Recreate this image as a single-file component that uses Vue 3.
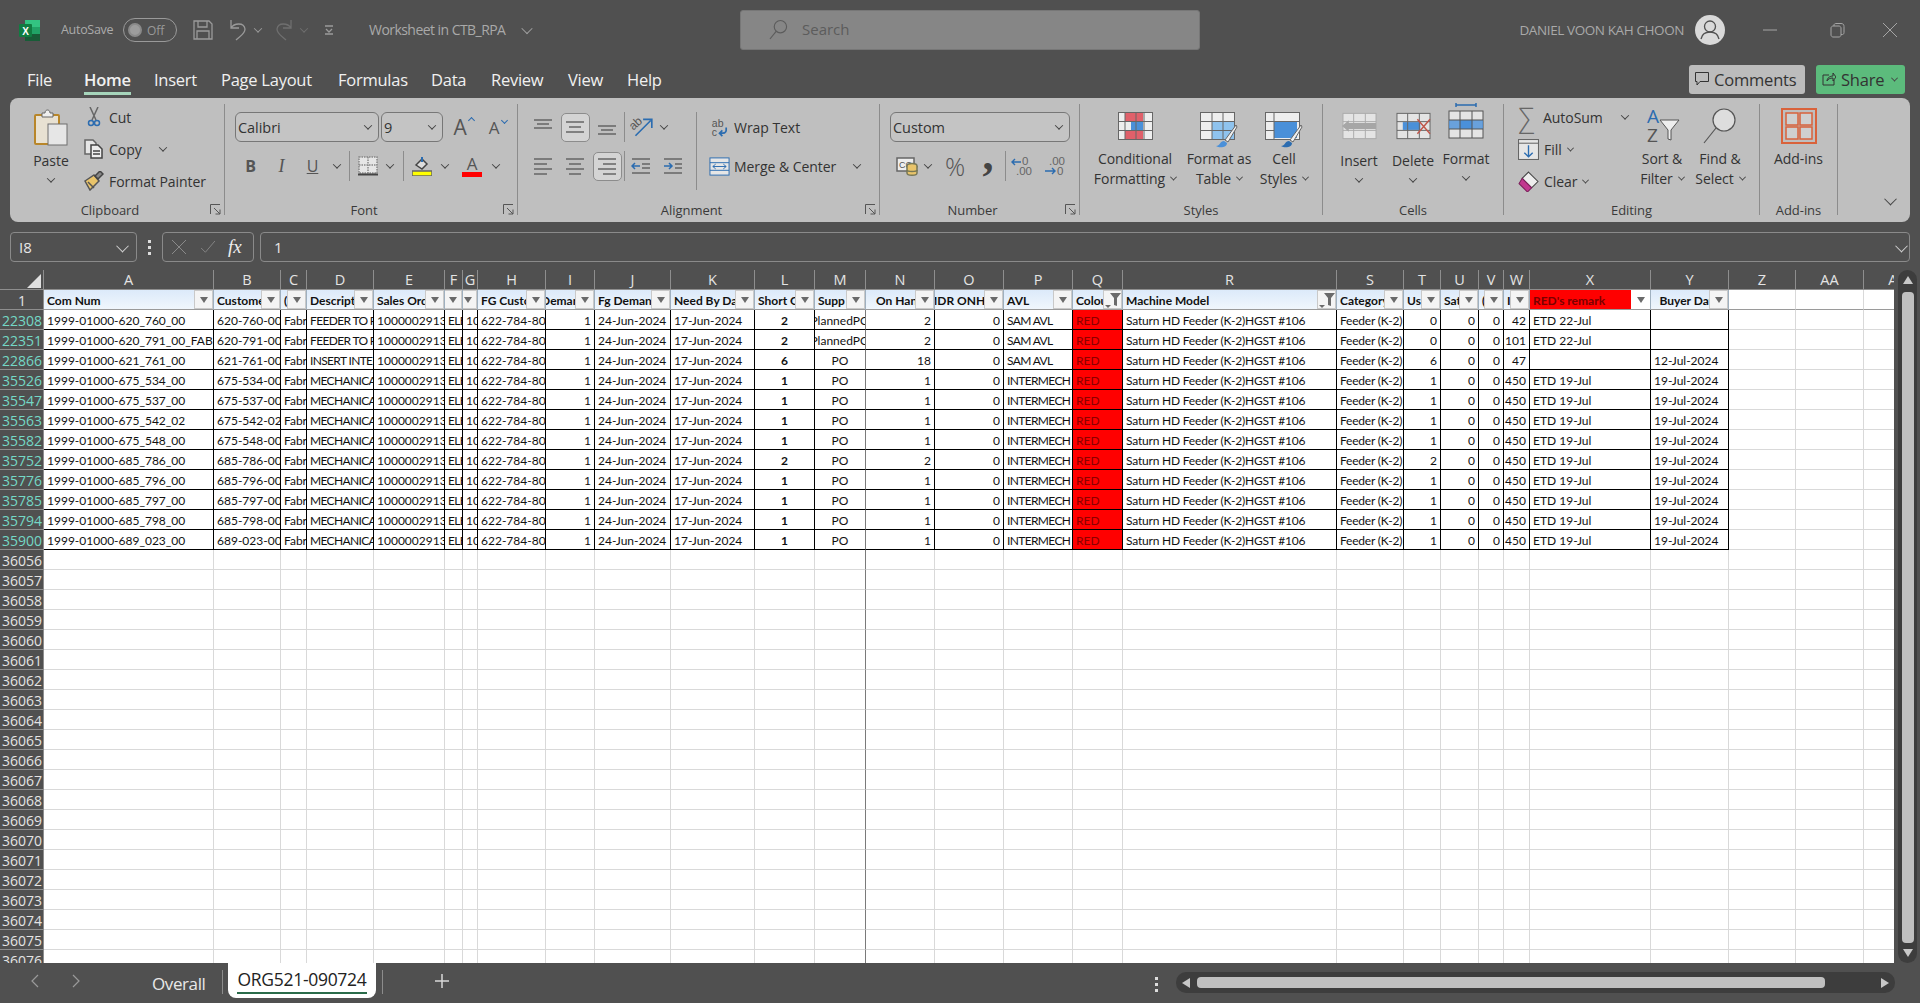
<template>
	<div class="app">
		<div class="titlebar">
			<div class="title-left">
				<svg class="logo" viewBox="0 0 21 21">
					<rect x="6" y="0" width="15" height="7" fill="#33c481" />
					<rect x="6" y="7" width="15" height="7" fill="#21a366" />
					<rect x="6" y="14" width="15" height="7" fill="#185c37" />
					<rect x="0" y="4" width="13" height="13" rx="1" fill="#107c41" />
					<text x="6.5" y="14.5" text-anchor="middle" class="logo-x">X</text>
				</svg>
				<span class="autosave">AutoSave</span>
				<span class="toggle"><i></i>Off</span>
				<svg class="qa save" viewBox="0 0 20 20"><path d="M1 1h15l3 3v15H1zM5 1v6h9V1M4 19v-8h12v8" /></svg>
				<svg class="qa undo" viewBox="0 0 18 22"><path d="M2 1v8h8M2 9c3-5 13-6 14 1 0 5-5 7-9 11" /></svg>
				<span class="chev dim"></span>
				<svg class="qa redo" viewBox="0 0 18 22"><path d="M16 1v8H8M16 9c-3-5-13-6-14 1 0 5 5 7 9 11" /></svg>
				<span class="chev dimmer"></span>
				<svg class="qa cust" viewBox="0 0 8 10"><path d="M0 1h8M1 4l3 3 3-3M0 9h8" /></svg>
				<span class="doc">Worksheet in CTB_RPA</span>
				<span class="chev doc-chev"></span>
			</div>
			<div class="search">
				<svg viewBox="0 0 20 22"><circle cx="12" cy="8" r="6.5" /><path d="M7.5 13L1 21" /></svg>
				<span>Search</span>
			</div>
			<div class="title-right">
				<span class="user">DANIEL VOON KAH CHOON</span>
				<svg class="avatar" viewBox="0 0 30 30">
					<circle cx="15" cy="15" r="15" fill="#d9d9d9" />
					<circle cx="15" cy="11.5" r="5.5" fill="none" stroke="#505050" stroke-width="1.3" />
					<path d="M6 24c1-5 5-7 9-7s8 2 9 7" fill="none" stroke="#505050" stroke-width="1.3" />
				</svg>
				<svg class="win wmin" viewBox="0 0 14 14"><path d="M0 7h14" /></svg>
				<svg class="win wres" viewBox="0 0 15 15"><path d="M4 3V2c0-1 1-1.500 2-1.500h5c2 0 3 1 3 3v6c0 1-.5 2-1.500 2H11M1 5c0-1 1-2 2-2h6c1 0 2 1 2 2v7c0 1-1 2-2 2H3c-1 0-2-1-2-2z" /></svg>
				<svg class="win wclose" viewBox="0 0 14 14"><path d="M0 0l14 14M14 0L0 14" /></svg>
			</div>
		</div>

		<div class="tabsrow">
			<span v-for="t of tabs" :key="t.name" class="tab" :style="{ width: t.w + 'px' }">
				<span :class="{ on: t.name === 'Home' }">{{ t.name }}</span>
			</span>
			<button class="comments">
				<svg viewBox="0 0 14 14"><path d="M.5.500h13v9H5l-3 3.500V9.500H.5z" /></svg>
				Comments
			</button>
			<button class="share">
				<svg viewBox="0 0 14 14"><path d="M7 3H1v10h11V8M5 9c0-3 3-5 6-5V1l3 4-3 4V6C8 6 6 7 5 9z" /></svg>
				Share
				<span class="chev"></span>
			</button>
		</div>

		<div class="ribbon">
			<section class="grp g-clip">
				<div class="body">
					<div class="big paste">
						<svg class="ic-paste" viewBox="0 0 34 38">
							<rect x="1" y="7" width="24" height="29" rx="1" fill="#e8e1d2" stroke="#b8862a" stroke-width="2" />
							<path d="M8 9V5h3c0-4 5-4 5 0h3v4z" fill="#eee" stroke="#666" />
							<rect x="14" y="16" width="19" height="21" fill="#e6e6e6" stroke="#6e6e6e" />
						</svg>
						<span class="cap">Paste</span>
						<span class="chev"></span>
					</div>
					<div class="stack">
						<div class="sm">
							<svg class="ic" viewBox="0 0 18 20"><path d="M5 0l6 13M13 0L7 13" stroke="#666" fill="none" /><circle cx="6" cy="16" r="2.500" fill="none" stroke="#2b6cb0" stroke-width="1.500" /><circle cx="12" cy="16" r="2.500" fill="none" stroke="#2b6cb0" stroke-width="1.500" /></svg>
							<span>Cut</span>
						</div>
						<div class="sm">
							<svg class="ic" viewBox="0 0 20 20"><path d="M1 1h8l3 3v11H1z" fill="#e6e6e6" stroke="#666" /><path d="M7 6h7l4 4v9H7z" fill="#eee" stroke="#444" /><path d="M9 12h7M9 15h7" stroke="#444" /></svg>
							<span>Copy</span>
							<span class="chev copy-chev"></span>
						</div>
						<div class="sm">
							<svg class="ic" viewBox="0 0 20 20"><path d="M1 10l9-6 5 6-9 9z" fill="#e9c46a" stroke="#555" /><path d="M11 5l5-5 3 3-5 5z" fill="#888" stroke="#444" /><path d="M4 11l6 6" stroke="#555" /></svg>
							<span>Format Painter</span>
						</div>
					</div>
				</div>
				<div class="lab"><span>Clipboard</span><svg class="launch" viewBox="0 0 11 11"><path d="M.5 10V.5H10M4 4l6 6M10 5.500V10H5.500" /></svg></div>
			</section>

			<section class="grp g-font">
				<div class="body rows">
					<div class="row">
						<div class="combo c-font">Calibri<span class="chev"></span></div>
						<div class="combo c-size">9<span class="chev"></span></div>
						<span class="grow">A<i class="up"></i></span>
						<span class="shrink">A<i class="down"></i></span>
					</div>
					<div class="row">
						<span class="tool fmt b">B</span>
						<span class="tool fmt i">I</span>
						<span class="tool fmt u">U</span>
						<span class="chevcell w17"><span class="chev"></span></span>
						<span class="vsep m4"></span>
						<span class="tool w27">
							<svg class="ic" viewBox="0 0 20 20"><rect x="1" y="1" width="18" height="16" fill="#e6e6e6" stroke="#888" stroke-dasharray="1.500 1" /><path d="M10 1v16M1 9h18" stroke="#888" stroke-dasharray="1.500 1" /><path d="M0 18.500h20" stroke="#444" stroke-width="2" /></svg>
						</span>
						<span class="chevcell w18"><span class="chev"></span></span>
						<span class="vsep m4"></span>
						<span class="tool w28">
							<svg class="ic" viewBox="0 0 20 20"><path d="M4 9l6-6 5 5-5 5z" fill="#ddd" stroke="#444" /><path d="M10 1v5" stroke="#2b6cb0" stroke-width="2" /><rect x="0" y="15" width="20" height="5" fill="#ffff00" /></svg>
						</span>
						<span class="chevcell w18"><span class="chev"></span></span>
						<span class="tool fontcolor"><em>A</em><i></i></span>
						<span class="chevcell w12"><span class="chev"></span></span>
					</div>
				</div>
				<div class="lab"><span>Font</span><svg class="launch" viewBox="0 0 11 11"><path d="M.5 10V.5H10M4 4l6 6M10 5.500V10H5.500" /></svg></div>
			</section>

			<section class="grp g-align">
				<div class="body align-body">
					<div class="rows align-left">
						<div class="row">
							<span class="tool w32"><svg class="ic" viewBox="0 0 20 20"><path d="M1 3h18M4 7h12M1 11h18" /></svg></span>
							<span class="tool w32"><span class="boxed"><svg class="ic" viewBox="0 0 20 20"><path d="M1 5h18M4 10h12M1 15h18" /></svg></span></span>
							<span class="tool w32"><svg class="ic" viewBox="0 0 20 20"><path d="M1 9h18M4 13h12M1 17h18" /></svg></span>
							<span class="vsep m1"></span>
							<span class="tool w34"><svg class="ic orient" viewBox="0 0 22 22"><text x="0" y="11" class="mini wide" transform="rotate(-42 6 9)">ab</text><path d="M5 19L19 5M12 4h8v8" stroke="#2b6cb0" stroke-width="1.500" /></svg></span>
							<span class="chevcell w10"><span class="chev"></span></span>
						</div>
						<div class="row">
							<span class="tool w32"><svg class="ic" viewBox="0 0 20 20"><path d="M1 3h18M1 8h13M1 13h18M1 18h13" /></svg></span>
							<span class="tool w32"><svg class="ic" viewBox="0 0 20 20"><path d="M1 3h18M4 8h12M1 13h18M4 18h12" /></svg></span>
							<span class="tool w32"><span class="boxed"><svg class="ic" viewBox="0 0 20 20"><path d="M1 3h18M6 8h13M1 13h18M6 18h13" /></svg></span></span>
							<span class="vsep m1"></span>
							<span class="tool w32"><svg class="ic" viewBox="0 0 20 20"><path d="M1 3h18M11 8h8M11 12h8M1 17h18" /><path d="M9 10H1M4 7l-3 3 3 3" stroke="#2b6cb0" stroke-width="1.500" /></svg></span>
							<span class="tool w32"><svg class="ic" viewBox="0 0 20 20"><path d="M1 3h18M12 8h7M12 12h7M1 17h18" /><path d="M1 10h8M6 7l3 3-3 3" stroke="#2b6cb0" stroke-width="1.500" /></svg></span>
						</div>
					</div>
					<span class="vsep tall"></span>
					<div class="rows align-right">
						<div class="row sm">
							<svg class="ic big-ic" viewBox="0 0 22 22"><text x="3" y="10" class="mini wide">ab</text><text x="3" y="20" class="mini wide">c</text><path d="M18 11v3c0 3-2 3-7 3M14 14l-3 3 3 3" stroke="#2b6cb0" stroke-width="1.800" fill="none" /></svg>
							<span>Wrap Text</span>
						</div>
						<div class="row sm">
							<svg class="ic big-ic" viewBox="0 0 22 22"><rect x="1" y="2" width="20" height="18" fill="#e6e6e6" stroke="#2b6cb0" /><path d="M1 7h20M1 15h20" stroke="#2b6cb0" /><path d="M4 11h14M7 8.500L4 11l3 2.500M15 8.500l3 2.500-3 2.500" stroke="#2b6cb0" fill="none" /></svg>
							<span>Merge &amp; Center</span>
							<span class="chev merge-chev"></span>
						</div>
					</div>
				</div>
				<div class="lab"><span>Alignment</span><svg class="launch" viewBox="0 0 11 11"><path d="M.5 10V.5H10M4 4l6 6M10 5.500V10H5.500" /></svg></div>
			</section>

			<section class="grp g-num">
				<div class="body rows">
					<div class="row">
						<div class="combo c-num">Custom<span class="chev"></span></div>
					</div>
					<div class="row">
						<span class="tool w33">
							<svg class="ic w22" viewBox="0 0 22 20"><rect x="1" y="2" width="17" height="13" fill="#eee" stroke="#666" /><text x="3" y="12" class="mini">CC</text><ellipse cx="16" cy="10" rx="5" ry="2.500" fill="#e9c46a" stroke="#775" /><path d="M11 10v7c0 3 10 3 10 0v-7" fill="#e9c46a" stroke="#775" /><path d="M11 14c0 2 10 2 10 0" stroke="#775" fill="none" /></svg>
						</span>
						<span class="chevcell w10"><span class="chev"></span></span>
						<span class="tool w44 pct">%</span>
						<span class="tool w22 comma">,</span>
						<span class="vsep m5"></span>
						<span class="tool w32 dec">
							<svg class="ic w22" viewBox="0 0 22 20"><text x="11" y="9" class="mini num">0</text><text x="5" y="19" class="mini num">.00</text><path d="M10 6H1M4 3L1 6l3 3" stroke="#2b6cb0" stroke-width="1.400" fill="none" /></svg>
						</span>
						<span class="tool w34 dec">
							<svg class="ic w22" viewBox="0 0 22 20"><text x="5" y="9" class="mini num">.00</text><text x="13" y="19" class="mini num">0</text><path d="M1 15h10M8 12l3 3-3 3" stroke="#2b6cb0" stroke-width="1.400" fill="none" /></svg>
						</span>
					</div>
				</div>
				<div class="lab"><span>Number</span><svg class="launch" viewBox="0 0 11 11"><path d="M.5 10V.5H10M4 4l6 6M10 5.500V10H5.500" /></svg></div>
			</section>

			<section class="grp g-styles">
				<div class="body">
					<div class="big tall-cap w110">
						<svg class="ic-big" viewBox="0 0 35 28">
							<rect x=".5" y=".5" width="34" height="27" fill="#eee" stroke="#666" />
							<rect x="7" y="1" width="18" height="8" fill="#e0606a" />
							<rect x="7" y="19" width="18" height="8" fill="#e0606a" />
							<rect x="13" y="10" width="12" height="8" fill="#4a90d9" />
							<path d="M7 1v26M18 1v26M26 1v26M1 9.500h33M1 18.500h33" stroke="#666" fill="none" />
						</svg>
						<span class="cap">Conditional</span>
						<span class="cap">Formatting<span class="chev inl"></span></span>
					</div>
					<div class="big tall-cap w58">
						<svg class="ic-big tall42" viewBox="0 0 38 42">
							<rect x=".5" y=".5" width="34" height="27" fill="#eee" stroke="#666" />
							<rect x="12" y="10" width="22" height="17" fill="#8fc3ee" />
							<path d="M12 1v26M23 1v26M1 9.500h33M1 18.500h33" stroke="#666" fill="none" />
							<path d="M36 13L25 28l3 2 9-15z" fill="#eee" stroke="#666" />
							<path d="M24 29c-4 0-4 5-8 5 3 2 11 2 11-3z" fill="#4a90d9" />
						</svg>
						<span class="cap">Format as</span>
						<span class="cap">Table<span class="chev inl"></span></span>
					</div>
					<div class="big tall-cap w72">
						<svg class="ic-big tall42" viewBox="0 0 38 42">
							<rect x=".5" y=".5" width="34" height="27" fill="#eee" stroke="#666" />
							<rect x="9" y="9" width="23" height="17" fill="#4a90d9" />
							<path d="M9 1v26M1 9.500h33M1 18.500h8" stroke="#666" fill="none" />
							<path d="M36 13L25 28l3 2 9-15z" fill="#eee" stroke="#666" />
							<path d="M24 29c-4 0-4 5-8 5 3 2 11 2 11-3z" fill="#2b6cb0" />
						</svg>
						<span class="cap">Cell</span>
						<span class="cap">Styles<span class="chev inl"></span></span>
					</div>
				</div>
				<div class="lab center"><span>Styles</span></div>
			</section>

			<section class="grp g-cells">
				<div class="body">
					<div class="big tall-cap w72">
						<svg class="ic-big" viewBox="0 0 36 28">
							<rect x="1" y="1" width="34" height="26" fill="#e4e4e4" stroke="#aaa" />
							<path d="M12 1v26M24 1v26M1 9.500h34M1 18.500h34" stroke="#aaa" />
							<path d="M0 14l7-6v3h28v6H7v3z" fill="#a6a6a6" />
						</svg>
						<span class="cap low">Insert</span>
						<span class="chev"></span>
					</div>
					<div class="big tall-cap w36">
						<svg class="ic-big" viewBox="0 0 36 28">
							<rect x="1" y="1" width="34" height="26" fill="#e4e4e4" stroke="#666" />
							<rect x="7" y="10" width="18" height="8" fill="#4a90d9" />
							<path d="M12 1v26M24 1v26M1 9.500h34M1 18.500h34" stroke="#666" />
							<path d="M22 7l13 15M35 7L22 22" stroke="#c0564a" stroke-width="1.500" />
						</svg>
						<span class="cap low">Delete</span>
						<span class="chev"></span>
					</div>
					<div class="big tall-cap w70 fmtbtn">
						<svg class="ic-big tall36" viewBox="0 0 36 36">
							<path d="M8 1h20M8-1v4M28-1v4" stroke="#2b6cb0" stroke-width="1.500" />
							<rect x="1" y="7" width="34" height="27" fill="#e4e4e4" stroke="#555" />
							<rect x="12" y="16" width="12" height="9" fill="#4a90d9" />
							<rect x="1" y="16" width="34" height="9" fill="#4a90d9" opacity=".8" />
							<path d="M12 7v27M24 7v27M1 16h34M1 25h34" stroke="#555" />
						</svg>
						<span class="cap">Format</span>
						<span class="chev"></span>
					</div>
				</div>
				<div class="lab center"><span>Cells</span></div>
			</section>

			<section class="grp g-edit">
				<div class="body">
					<div class="stack edit-stack">
						<div class="sm">
							<span class="sigma">&#x2211;</span>
							<span>AutoSum</span>
							<span class="chev auto-chev"></span>
						</div>
						<div class="sm">
							<svg class="ic big-ic" viewBox="0 0 20 20"><rect x=".5" y=".5" width="19" height="19" fill="#e6e6e6" stroke="#666" /><path d="M.5 4h19" stroke="#666" /><path d="M10 6v11M6 13l4 4 4-4" stroke="#2b6cb0" fill="none" stroke-width="1.300" /></svg>
							<span>Fill</span>
							<span class="chev inl"></span>
						</div>
						<div class="sm">
							<svg class="ic big-ic" viewBox="0 0 20 20"><path d="M10 1l9 9-6 6-9-9z" fill="#eee" stroke="#444" /><path d="M4 7l9 9-4 4-8-8z" fill="#c2398f" stroke="#7a1f5a" /></svg>
							<span>Clear</span>
							<span class="chev inl"></span>
						</div>
					</div>
					<div class="big tall-cap w54 sortbtn">
						<svg class="ic-tall" viewBox="0 0 40 36">
							<text x="5" y="15" class="az blue">A</text>
							<text x="5" y="34" class="az">Z</text>
							<path d="M18 12h19l-8 10v10l-3-1v-9z" fill="#eee" stroke="#555" />
						</svg>
						<span class="cap">Sort &amp;</span>
						<span class="cap">Filter<span class="chev inl"></span></span>
					</div>
					<div class="big tall-cap w62 sortbtn">
						<svg class="ic-tall" viewBox="0 0 40 36">
							<circle cx="24" cy="12" r="11" fill="#ddd" stroke="#555" stroke-width="1.200" />
							<path d="M16 20L4 35" stroke="#555" stroke-width="1.200" />
						</svg>
						<span class="cap">Find &amp;</span>
						<span class="cap">Select<span class="chev inl"></span></span>
					</div>
				</div>
				<div class="lab center"><span>Editing</span></div>
			</section>

			<section class="grp g-add">
				<div class="body">
					<div class="big tall-cap w77 sortbtn">
						<svg class="ic-tall addins" viewBox="0 0 36 36">
							<rect x="1" y="1" width="34" height="34" fill="none" stroke="#d9623b" stroke-width="2" />
							<rect x="5" y="5" width="12" height="12" fill="#cfcfcf" stroke="#d9623b" stroke-width="1.500" />
							<rect x="19" y="5" width="12" height="12" fill="#cfcfcf" stroke="#d9623b" stroke-width="1.500" />
							<rect x="5" y="19" width="12" height="12" fill="#cfcfcf" stroke="#d9623b" stroke-width="1.500" />
							<rect x="19" y="19" width="12" height="12" fill="#cfcfcf" stroke="#d9623b" stroke-width="1.500" />
						</svg>
						<span class="cap">Add-ins</span>
					</div>
				</div>
				<div class="lab center"><span>Add-ins</span></div>
			</section>

			<div class="collapse"><span class="chev"></span></div>
		</div>

		<div class="formulabar">
			<div class="namebox">I8<span class="chev"></span></div>
			<div class="dots"><i></i><i></i><i></i></div>
			<div class="fxbox">
				<svg viewBox="0 0 14 14"><path d="M0 0l14 14M14 0L0 14" /></svg>
				<svg viewBox="0 0 16 14"><path d="M0 8l5 5L16 0" /></svg>
				<em>fx</em>
			</div>
			<div class="formula">1<span class="chev"></span></div>
		</div>

		<div class="sheetarea">
			<div class="sheet">
				<table :style="{ width: tableWidth + 'px' }">
					<colgroup>
						<col style="width: 44px" />
						<col v-for="c of cols" :key="c.key" :style="{ width: c.width + 'px' }" />
					</colgroup>
					<thead>
						<tr>
							<th class="corner"><i></i></th>
							<th v-for="c of cols" :key="c.key" class="letter">{{ c.key }}</th>
						</tr>
					</thead>
					<tbody>
						<tr>
							<th class="rownum">1</th>
							<td v-for="c of cols" :key="c.key" class="hd" :class="[c.hd ? '' : 'nohd', c.key === 'X' ? 'redhd' : '']">
								<template v-if="c.hd">
									<div class="cell" :class="c.hdAlign || 'l'"><span>{{ c.title }}</span></div>
									<span class="filter" :class="{ active: c.filtered }">
										<svg v-if="c.filtered" viewBox="0 0 18 18"><path d="M6 2h11l-4 5v8l-3-1V7z" fill="#6a6a6a" /><path d="M1 14h6l-3 3z" fill="#6a6a6a" /></svg>
										<i v-else></i>
									</span>
								</template>
							</td>
						</tr>
						<tr v-for="(r, i) of rows" :key="r.num" class="datarow">
							<th class="rownum teal">{{ r.num }}</th>
							<td v-for="(c, j) of cols" :key="c.key" :class="[j < 25 ? 'inked' : '', c.key === 'Q' ? 'redcell' : '', c.key === 'M' ? 'frozen' : '']">
								<div v-if="j < 25" class="cell" :class="[c.align, c.bold ? 'bold' : '', c.tight ? 'tight' : '', c.caps ? 'caps' : '']"><span>{{ r.cells[j] }}</span></div>
							</td>
						</tr>
						<tr v-for="n of emptyRows" :key="n">
							<th class="rownum">{{ n }}</th>
							<td v-for="c of cols" :key="c.key" :class="{ frozen: c.key === 'M' }"></td>
						</tr>
					</tbody>
				</table>
			</div>
			<div class="vscroll">
				<div class="vtrack">
					<i class="tri-up"></i>
					<div class="vthumb"></div>
					<i class="tri-down"></i>
				</div>
			</div>
		</div>

		<div class="footer">
			<svg class="nav" viewBox="0 0 10 14"><path d="M8 1L2 7l6 6" /></svg>
			<svg class="nav nav2" viewBox="0 0 10 14"><path d="M2 1l6 6-6 6" /></svg>
			<span class="sheet-tab">Overall</span>
			<span class="tab-sep"></span>
			<span class="sheet-active"><span>ORG521-090724</span></span>
			<span class="tab-sep sep2"></span>
			<svg class="plus" viewBox="0 0 14 14"><path d="M7 0v14M0 7h14" /></svg>
			<span class="foot-dots"><i></i><i></i><i></i></span>
			<div class="htrack">
				<i class="tri-left"></i>
				<div class="hthumb"></div>
				<i class="tri-right"></i>
			</div>
		</div>
	</div>
</template>

<style>
	body
	{
		margin: 0;
		background: #505050;
	}
</style>

<style scoped>
	.app
	{
		width: 1920px;
		height: 1003px;
		overflow: hidden;
		background: #505050;
		font-family: "Open Sans", "Noto Sans", sans-serif;
		display: flex;
		flex-direction: column;
		color: #333;
	}

	.chev
	{
		display: inline-block;
		width: 5px;
		height: 5px;
		border-right: 1.4px solid #444;
		border-bottom: 1.4px solid #444;
		transform: rotate(45deg) translate(-1px, -1px);
	}

	.chev.inl
	{
		margin-left: 6px;
		width: 4px;
		height: 4px;
	}

	/* title bar */
	.titlebar
	{
		height: 60px;
		display: flex;
		align-items: center;
		color: #b5b5b5;
		flex: none;
	}

	.title-left
	{
		width: 740px;
		display: flex;
		align-items: center;
		padding-left: 19px;
		box-sizing: border-box;
	}

	.logo
	{
		width: 21px;
		height: 21px;
	}

	.logo-x
	{
		font: bold 10px "Liberation Sans", sans-serif;
		fill: #fff;
	}

	.autosave
	{
		margin-left: 21px;
		width: 54px;
		font-size: 12.5px;
		letter-spacing: -.3px;
		color: #ababab;
		white-space: nowrap;
		padding-bottom: 1px;
	}

	.toggle
	{
		margin-left: 8px;
		width: 54px;
		height: 24px;
		box-sizing: border-box;
		border: 1px solid #9a9a9a;
		border-radius: 12px;
		display: flex;
		align-items: center;
		gap: 5px;
		padding-left: 4px;
		font-size: 12px;
		color: #999;
	}

	.toggle i
	{
		width: 14px;
		height: 14px;
		border-radius: 50%;
		background: #9c9c9c;
		border: 2px solid #8a8a8a;
		box-sizing: border-box;
	}

	.qa
	{
		fill: none;
		stroke: #9a9a9a;
		stroke-width: 1.3;
		height: 20px;
	}

	.save { width: 20px; margin-left: 16px; }
	.undo { width: 18px; margin-left: 16px; height: 22px; }
	.redo { width: 18px; margin-left: 14px; height: 22px; stroke: #6f6f6f; }
	.cust { width: 8px; height: 10px; margin-left: 18px; }

	.chev.dim
	{
		margin-left: 8px;
		border-color: #9a9a9a;
	}

	.chev.dimmer
	{
		margin-left: 8px;
		border-color: #6f6f6f;
	}

	.doc
	{
		margin-left: 36px;
		width: 144px;
		white-space: nowrap;
		font-size: 14px;
		letter-spacing: -.55px;
		color: #a9a9a9;
		padding-bottom: 1px;
	}

	.chev.doc-chev
	{
		margin-left: 10px;
		width: 7px;
		height: 7px;
		border-color: #a0a0a0;
		border-width: 1px;
	}

	.search
	{
		width: 460px;
		height: 40px;
		box-sizing: border-box;
		background: #868686;
		border: 1px solid #777;
		border-radius: 3px;
		display: flex;
		align-items: center;
		padding: 0 0 2px 28px;
		gap: 14px;
		font-size: 15px;
		color: #5c5c5c;
	}

	.search svg
	{
		width: 19px;
		height: 21px;
		fill: none;
		stroke: #5c5c5c;
		stroke-width: 1.2;
	}

	.title-right
	{
		flex: 1;
		display: flex;
		align-items: center;
		justify-content: flex-end;
		padding-right: 23px;
	}

	.user
	{
		font-size: 13.5px;
		letter-spacing: -.4px;
		white-space: nowrap;
		color: #a9a9a9;
	}

	.avatar
	{
		width: 30px;
		height: 30px;
		margin-left: 11px;
	}

	.win
	{
		fill: none;
		stroke: #a5a5a5;
		stroke-width: 1;
		width: 14px;
		height: 14px;
	}

	.wmin { margin-left: 38px; }
	.wres { margin-left: 53px; width: 15px; height: 15px; }
	.wclose { margin-left: 38px; }

	/* ribbon tabs */
	.tabsrow
	{
		height: 38px;
		flex: none;
		display: flex;
		align-items: center;
		padding-left: 27px;
		font-size: 16.5px;
		color: #f0f0f0;
		position: relative;
	}

	.tab
	{
		display: block;
		white-space: nowrap;
		letter-spacing: -.25px;
	}

	.tab .on
	{
		position: relative;
		font-weight: 600;
		display: inline-block;
	}

	.tab .on::after
	{
		content: "";
		position: absolute;
		left: 0;
		right: 0;
		bottom: -4px;
		height: 3px;
		background: #a6d5bb;
	}

	.comments,
	.share
	{
		height: 29px;
		border: 0;
		border-radius: 3px;
		font: 16.5px "Open Sans", sans-serif;
		letter-spacing: -.2px;
		color: #333;
		display: flex;
		align-items: center;
		gap: 5px;
		padding: 0 0 0 6px;
		box-sizing: border-box;
		white-space: nowrap;
	}

	.comments svg,
	.share svg
	{
		width: 14px;
		height: 14px;
		fill: none;
		stroke: #333;
	}

	.comments
	{
		margin-left: auto;
		width: 116px;
		background: #bcbcbc;
	}

	.share
	{
		margin-left: 11px;
		margin-right: 15px;
		width: 89px;
		background: #5cbb7c;
	}

	.share .chev
	{
		margin-left: 3px;
		width: 4px;
		height: 4px;
	}

	/* ribbon */
	.ribbon
	{
		margin-left: 10px;
		width: 1900px;
		height: 124px;
		box-sizing: border-box;
		flex: none;
		background: #bfbfbf;
		border-radius: 8px;
		padding: 6px 0 7px;
		display: flex;
		color: #333;
		font-size: 14px;
		letter-spacing: -.05px;
		position: relative;
	}

	.grp
	{
		height: 111px;
		box-sizing: border-box;
		border-right: 1px solid #8c8c8c;
		display: flex;
		flex-direction: column;
		flex: none;
	}

	.g-clip { width: 215px; }
	.g-font { width: 293px; }
	.g-align { width: 362px; }
	.g-num { width: 200px; }
	.g-styles { width: 243px; }
	.g-cells { width: 181px; }
	.g-edit { width: 256px; }
	.g-add { width: 78px; }

	.body
	{
		flex: 1;
		display: flex;
		min-height: 0;
	}

	.lab
	{
		height: 14px;
		margin-bottom: -2px;
		display: flex;
		align-items: center;
		font-size: 13px;
		line-height: 14px;
		color: #3a3a3a;
	}

	.lab span
	{
		flex: 1;
		text-align: center;
	}

	.launch
	{
		width: 11px;
		height: 11px;
		margin: 0 3px 2px 0;
		fill: none;
		stroke: #555;
	}

	.big
	{
		display: flex;
		flex-direction: column;
		align-items: center;
		white-space: nowrap;
		flex: none;
	}

	.paste
	{
		width: 50px;
		margin-left: 16px;
		margin-top: 4px;
	}

	.ic-paste
	{
		width: 34px;
		height: 38px;
	}

	.cap
	{
		line-height: 20px;
		height: 20px;
	}

	.paste .cap
	{
		margin-top: 5px;
	}

	.paste .chev
	{
		margin-top: 8px;
	}

	.stack
	{
		display: grid;
		grid-template-rows: 32px 32px 32px;
		margin-top: -3px;
		margin-left: 8px;
	}

	.sm
	{
		display: flex;
		align-items: center;
		gap: 5px;
		white-space: nowrap;
	}

	.ic
	{
		width: 20px;
		height: 20px;
		fill: none;
		stroke: #666;
		stroke-width: 1.5;
		flex: none;
	}

	.big-ic
	{
		width: 21px;
		height: 21px;
		stroke-width: 1;
	}

	.orient
	{
		width: 24px;
		height: 24px;
	}

	.copy-chev
	{
		margin-left: 13px;
	}

	.rows
	{
		flex-direction: column;
		display: flex;
		padding-top: 8px;
		gap: 9px;
	}

	.row
	{
		display: flex;
		align-items: center;
		height: 30px;
	}

	.g-font .rows { padding-left: 10px; }
	.g-num .rows { padding-left: 10px; }

	.combo
	{
		height: 30px;
		box-sizing: border-box;
		border: 1px solid #777;
		border-radius: 6px;
		display: flex;
		align-items: center;
		justify-content: space-between;
		padding: 0 7px 0 2px;
		font-size: 14.5px;
		background: #c4c4c4;
	}

	.c-font { width: 144px; }
	.c-size { width: 62px; margin-left: 2px; }
	.c-num { width: 180px; }

	.grow,
	.shrink
	{
		font-size: 20px;
		color: #555;
		position: relative;
		width: 18px;
		text-align: center;
	}

	.grow { margin-left: 8px; font-size: 21px; }
	.shrink { margin-left: 16px; font-size: 17px; }

	.grow i,
	.shrink i
	{
		position: absolute;
		top: 5px;
		right: -5px;
		width: 4px;
		height: 4px;
		border-top: 1.5px solid #2b6cb0;
		border-left: 1.5px solid #2b6cb0;
		transform: rotate(45deg);
	}

	.shrink i
	{
		transform: rotate(225deg);
		top: 2px;
		right: -4px;
	}

	.tool
	{
		display: flex;
		align-items: center;
		justify-content: center;
		height: 30px;
		flex: none;
		width: 31px;
	}

	.chevcell
	{
		display: flex;
		align-items: center;
		justify-content: center;
		flex: none;
	}

	.fmt
	{
		font-size: 16px;
		color: #555;
	}

	.fmt.b { font-weight: 700; }
	.fmt.i { font-style: italic; font-family: "Liberation Serif", serif; font-size: 18px; }
	.fmt.u { text-decoration: underline; }

	.fontcolor
	{
		width: 36px;
		flex-direction: column;
	}

	.fontcolor em
	{
		font-style: normal;
		font-size: 17px;
		line-height: 17px;
		color: #555;
	}

	.fontcolor i
	{
		width: 20px;
		height: 5px;
		background: #f00;
	}

	.w10 { width: 10px; }
	.w12 { width: 12px; }
	.w17 { width: 17px; }
	.w18 { width: 18px; }
	.w22 { width: 22px; }
	.w27 { width: 27px; }
	.w28 { width: 28px; }
	.w32 { width: 32px; }
	.w33 { width: 33px; }
	.w34 { width: 34px; }
	.w36 { width: 36px; }
	.w44 { width: 44px; }
	.w54 { width: 54px; }
	.w58 { width: 58px; }
	.w62 { width: 62px; }
	.w70 { width: 70px; }
	.w72 { width: 72px; }
	.w77 { width: 77px; }
	.w110 { width: 110px; }

	.vsep
	{
		width: 1px;
		height: 30px;
		background: #8c8c8c;
		flex: none;
	}

	.vsep.m4 { margin: 0 4px; }
	.vsep.m5 { margin: 0 0 0 6px; }
	.vsep.m1 { margin: 0 0 0 1px; }

	.vsep.tall
	{
		height: 78px;
		margin-top: 8px;
	}

	.align-body
	{
		align-items: flex-start;
	}

	.align-left
	{
		width: 178px;
		padding-left: 9px;
		box-sizing: border-box;
	}

	.align-right
	{
		padding-left: 12px;
	}

	.align-right .row
	{
		gap: 4px;
	}

	.boxed
	{
		width: 29px;
		height: 29px;
		box-sizing: border-box;
		border: 1px solid #8c8c8c;
		border-radius: 5px;
		background: #d4d4d4;
		display: flex;
		align-items: center;
		justify-content: center;
	}

	.mini
	{
		font: 9px "Liberation Sans", sans-serif;
		fill: #555;
		stroke: none;
	}

	.mini.wide
	{
		font-size: 11px;
	}

	.mini.num
	{
		font-size: 11.5px;
		fill: #666;
	}

	.merge-chev
	{
		margin-left: 14px;
	}

	.pct
	{
		font-size: 25px;
		color: #555;
		font-weight: 300;
	}

	.comma
	{
		font: bold 44px "Liberation Serif", serif;
		color: #444;
		padding-bottom: 22px;
		box-sizing: border-box;
	}

	.tall-cap
	{
		padding-top: 8px;
	}

	.ic-big
	{
		width: 35px;
		height: 28px;
		margin-bottom: 9px;
		overflow: visible;
		flex: none;
	}

	.ic-big.tall42
	{
		width: 38px;
		height: 42px;
		margin-bottom: -5px;
	}

	.ic-big.tall36
	{
		width: 36px;
		height: 36px;
		margin-top: -8px;
		margin-bottom: 9px;
	}

	.cap.low
	{
		margin-top: 2px;
	}

	.big .chev
	{
		margin-top: 6px;
		flex: none;
	}

	.big .chev.inl
	{
		margin-top: 0;
		vertical-align: 3px;
	}

	.edit-stack
	{
		margin-left: 14px;
		width: 117px;
		flex: none;
	}

	.sigma
	{
		font-size: 27px;
		line-height: 20px;
		color: #666;
		width: 20px;
		font-weight: 300;
	}

	.auto-chev
	{
		margin-left: 14px;
	}

	.edit-stack .sm .chev.inl
	{
		margin-left: 1px;
	}

	.sortbtn
	{
		padding-top: 4px;
	}

	.ic-tall
	{
		width: 40px;
		height: 36px;
		margin-bottom: 5px;
		flex: none;
	}

	.addins
	{
		width: 36px;
	}

	.az
	{
		font: 19px "Open Sans", sans-serif;
		fill: #555;
	}

	.az.blue
	{
		fill: #2b6cb0;
	}

	.collapse
	{
		flex: 1;
		display: flex;
		align-items: flex-end;
		justify-content: flex-end;
		padding: 0 15px 10px 0;
	}

	.collapse .chev
	{
		width: 8px;
		height: 8px;
		border-width: 1px;
	}

	/* formula bar */
	.formulabar
	{
		margin: 10px 10px 8px;
		height: 30px;
		display: flex;
		flex: none;
		color: #e6e6e6;
		font-size: 15px;
	}

	.namebox,
	.fxbox,
	.formula
	{
		box-sizing: border-box;
		height: 30px;
		border: 1px solid #8a8a8a;
		border-radius: 4px;
		display: flex;
		align-items: center;
	}

	.namebox
	{
		width: 127px;
		padding: 0 6px 0 8px;
		justify-content: space-between;
	}

	.formulabar .chev
	{
		width: 8px;
		height: 8px;
		border-color: #d0d0d0;
		border-width: 1.200px;
		margin-right: 3px;
	}

	.dots
	{
		width: 25px;
		display: flex;
		flex-direction: column;
		align-items: center;
		justify-content: center;
		gap: 3px;
	}

	.dots i
	{
		width: 3px;
		height: 3px;
		background: #ddd;
	}

	.fxbox
	{
		width: 92px;
		padding-left: 9px;
		gap: 15px;
	}

	.fxbox svg
	{
		width: 14px;
		height: 14px;
		fill: none;
		stroke: #8a8a8a;
		stroke-width: 1;
	}

	.fxbox em
	{
		font: italic 19px "Liberation Serif", serif;
		color: #ededed;
		margin-left: -2px;
	}

	.formula
	{
		margin-left: 6px;
		flex: 1;
		padding-left: 13px;
		justify-content: space-between;
	}

	/* sheet */
	.sheetarea
	{
		height: 693px;
		display: flex;
		flex: none;
	}

	.sheet
	{
		width: 1894px;
		overflow: hidden;
		background: #fff;
		flex: none;
	}

	table
	{
		table-layout: fixed;
		border-collapse: separate;
		border-spacing: 0;
		font: 12px/17px Lato, "Liberation Sans", sans-serif;
		color: #111;
	}

	th,
	td
	{
		box-sizing: border-box;
		height: 20px;
		padding: 0;
		font-weight: normal;
		border-right: 1px solid #d9d9d9;
		border-bottom: 1px solid #d9d9d9;
		overflow: hidden;
		white-space: nowrap;
		position: relative;
	}

	.letter,
	.corner
	{
		background: #505050;
		color: #e4e4e4;
		font-family: "Open Sans", sans-serif;
		font-size: 14.5px;
		border-right: 1px solid #8e8e8e;
		border-bottom: 1px solid #8e8e8e;
	}

	.rownum
	{
		background: #505050;
		color: #e4e4e4;
		font-family: "Open Sans", sans-serif;
		font-size: 14px;
		line-height: 16px;
		padding-top: 2px;
		padding-left: 1px;
		border-right: 1px solid #8e8e8e;
		border-bottom: 1px solid #8e8e8e;
	}

	.rownum.teal
	{
		color: #74d8c6;
	}

	.corner i
	{
		position: absolute;
		right: 2px;
		bottom: 1px;
		width: 0;
		height: 0;
		border-left: 14px solid transparent;
		border-bottom: 14px solid #e0e0e0;
	}

	.cell
	{
		height: 19px;
		box-sizing: border-box;
		padding: 2px 3px 0;
		display: flex;
		align-items: center;
		overflow: hidden;
	}

	.cell span
	{
		flex: none;
	}

	.cell.l { justify-content: flex-start; }
	.cell.r { justify-content: flex-end; }
	.cell.c { justify-content: center; }
	.cell.bold { font-weight: 700; }
	.cell.tight { letter-spacing: -.2px; }
	.cell.caps { letter-spacing: -.65px; }

	.hd
	{
		background: linear-gradient(#dceafa, #f0f6fc);
		font-weight: 700;
		border-right: 1px solid #9fb0bf;
		border-bottom: 1px solid #9a9a9a;
	}

	.hd.nohd
	{
		background: #fff;
		border-right-color: #d9d9d9;
	}

	.hd.redhd
	{
		background: #f00;
		color: #7a0000;
	}

	.filter
	{
		position: absolute;
		top: 0;
		right: 0;
		width: 19px;
		height: 19px;
		box-sizing: border-box;
		background: #f4f4f4;
		border: 1px solid #c9c9c9;
		display: flex;
		align-items: center;
		justify-content: center;
	}

	.filter i
	{
		width: 0;
		height: 0;
		border-left: 4.500px solid transparent;
		border-right: 4.500px solid transparent;
		border-top: 6px solid #6a6a6a;
	}

	.filter svg
	{
		width: 18px;
		height: 18px;
		flex: none;
	}

	.redhd .filter
	{
		background: #fff;
		border-color: #fff;
	}

	.inked
	{
		border-right-color: #000;
		border-bottom-color: #000;
	}

	.redcell
	{
		background: #f00;
		color: #8a0000;
	}

	.frozen
	{
		border-right-color: #7a7a7a;
	}

	.vscroll
	{
		width: 26px;
		flex: none;
		background: #505050;
	}

	.vtrack
	{
		width: 19px;
		height: 693px;
		margin-left: 4px;
		box-sizing: border-box;
		padding: 6px 0;
		border-radius: 10px;
		background: #3d3d3d;
		display: flex;
		flex-direction: column;
		align-items: center;
	}

	.tri-up,
	.tri-down
	{
		width: 0;
		height: 0;
		border-left: 5px solid transparent;
		border-right: 5px solid transparent;
		flex: none;
	}

	.tri-up
	{
		border-bottom: 8px solid #c8c8c8;
	}

	.tri-down
	{
		border-top: 8px solid #c8c8c8;
	}

	.vthumb
	{
		width: 12px;
		flex: 1;
		margin: 8px 0 6px;
		border-radius: 4px;
		background: #c0c0c0;
	}

	/* footer */
	.footer
	{
		height: 40px;
		flex: none;
		display: flex;
		align-items: flex-start;
		background: #505050;
		color: #e8e8e8;
	}

	.nav
	{
		width: 10px;
		height: 14px;
		margin: 11px 0 0 30px;
		fill: none;
		stroke: #9a9a9a;
		stroke-width: 1.200;
		flex: none;
	}

	.nav2
	{
		margin-left: 31px;
	}

	.sheet-tab
	{
		margin-left: 71px;
		width: 53px;
		margin-top: 9px;
		font-size: 17px;
		letter-spacing: -.4px;
		white-space: nowrap;
	}

	.tab-sep
	{
		width: 1px;
		height: 24px;
		margin: 7px 0 0 17px;
		background: #8c8c8c;
		flex: none;
	}

	.sep2
	{
		margin-left: 6px;
	}

	.sheet-active
	{
		margin-left: 5px;
		width: 148px;
		height: 35px;
		box-sizing: border-box;
		background: #fff;
		border-radius: 0 0 8px 8px;
		color: #222;
		font-size: 17.5px;
		letter-spacing: -.3px;
		text-align: center;
		flex: none;
		padding-top: 5px;
	}

	.sheet-active span
	{
		display: block;
		width: 130px;
		margin: 0 auto;
		height: 26px;
		line-height: 22px;
		box-sizing: border-box;
		border-bottom: 2px solid #2a6b4a;
		white-space: nowrap;
	}

	.plus
	{
		width: 14px;
		height: 14px;
		margin: 11px 0 0 52px;
		fill: none;
		stroke: #d8d8d8;
		stroke-width: 1.500;
		flex: none;
	}

	.foot-dots
	{
		margin: 14px 18px 0 auto;
		display: flex;
		flex-direction: column;
		gap: 3px;
	}

	.foot-dots i
	{
		width: 3px;
		height: 3px;
		background: #ddd;
	}

	.htrack
	{
		width: 719px;
		height: 21px;
		margin: 9px 25px 0 0;
		box-sizing: border-box;
		background: #3d3d3d;
		border-radius: 10px;
		display: flex;
		align-items: center;
		padding: 0 6px;
	}

	.tri-left,
	.tri-right
	{
		width: 0;
		height: 0;
		border-top: 5px solid transparent;
		border-bottom: 5px solid transparent;
		flex: none;
	}

	.tri-left
	{
		border-right: 8px solid #c8c8c8;
	}

	.tri-right
	{
		border-left: 8px solid #c8c8c8;
		margin-left: auto;
	}

	.hthumb
	{
		width: 628px;
		height: 11px;
		margin-left: 7px;
		border-radius: 4px;
		background: #c0c0c0;
	}
</style>

<script setup>
	const tabs = [
		{ name: "File", w: 57 },
		{ name: "Home", w: 70 },
		{ name: "Insert", w: 67 },
		{ name: "Page Layout", w: 117 },
		{ name: "Formulas", w: 93 },
		{ name: "Data", w: 60 },
		{ name: "Review", w: 77 },
		{ name: "View", w: 59 },
		{ name: "Help", w: 40 },
	];

	// right edge of every column, read off the screenshot
	const colDefs = [
		["A", 214, "Com Num", "l"],
		["B", 281, "Customer", "l"],
		["C", 307, "(", "l", "l"],
		["D", 374, "Description", "l"],
		["E", 445, "Sales Order", "l"],
		["F", 463, "", "l"],
		["G", 478, "", "l"],
		["H", 546, "FG Customer", "l"],
		["I", 595, "Demand Q", "r", "c"],
		["J", 671, "Fg Demand", "l"],
		["K", 755, "Need By Date", "l"],
		["L", 815, "Short Qty", "c"],
		["M", 866, "Supp", "c"],
		["N", 935, "On Hand", "r", "c"],
		["O", 1004, "MDR ONHAND", "r", "c"],
		["P", 1073, "AVL", "l"],
		["Q", 1123, "Colour", "l"],
		["R", 1337, "Machine Model", "l"],
		["S", 1404, "Category", "l"],
		["T", 1441, "Us", "r", "l"],
		["U", 1479, "Sat", "r", "l"],
		["V", 1504, "(", "r", "l"],
		["W", 1530, "I", "r", "l"],
		["X", 1651, "RED's remark", "l"],
		["Y", 1729, "Buyer Date", "l", "c"],
		["Z", 1796],
		["AA", 1864],
		["AB", 1932],
	];

	const filtered = ["Q", "R"];
	const tight = ["R", "S"];
	const caps = ["D", "F", "P"];

	let prev = 44;
	const cols = colDefs.map(([key, right, title, align, hdAlign]) => {
		const width = right - prev;
		prev = right;
		return {
			key,
			width,
			title,
			align,
			hdAlign,
			hd: title !== undefined,
			bold: key === "L",
			tight: tight.includes(key),
			caps: caps.includes(key),
			filtered: filtered.includes(key),
		};
	});

	const tableWidth = prev;

	const source = [
		[22308, "620_760_00", "620-760-00", "FEEDER TO RAIL", 2, "PlannedPO", 2, "SAM AVL", 0, 42, "ETD 22-Jul", ""],
		[22351, "620_791_00_FAB", "620-791-00", "FEEDER TO RAIL", 2, "PlannedPO", 2, "SAM AVL", 0, 101, "ETD 22-Jul", ""],
		[22866, "621_761_00", "621-761-00", "INSERT INTERNAL", 6, "PO", 18, "SAM AVL", 6, 47, "", "12-Jul-2024"],
		[35526, "675_534_00", "675-534-00", "MECHANICAL", 1, "PO", 1, "INTERMECH", 1, 450, "ETD 19-Jul", "19-Jul-2024"],
		[35547, "675_537_00", "675-537-00", "MECHANICAL", 1, "PO", 1, "INTERMECH", 1, 450, "ETD 19-Jul", "19-Jul-2024"],
		[35563, "675_542_02", "675-542-02", "MECHANICAL", 1, "PO", 1, "INTERMECH", 1, 450, "ETD 19-Jul", "19-Jul-2024"],
		[35582, "675_548_00", "675-548-00", "MECHANICAL", 1, "PO", 1, "INTERMECH", 1, 450, "ETD 19-Jul", "19-Jul-2024"],
		[35752, "685_786_00", "685-786-00", "MECHANICAL", 2, "PO", 2, "INTERMECH", 2, 450, "ETD 19-Jul", "19-Jul-2024"],
		[35776, "685_796_00", "685-796-00", "MECHANICAL", 1, "PO", 1, "INTERMECH", 1, 450, "ETD 19-Jul", "19-Jul-2024"],
		[35785, "685_797_00", "685-797-00", "MECHANICAL", 1, "PO", 1, "INTERMECH", 1, 450, "ETD 19-Jul", "19-Jul-2024"],
		[35794, "685_798_00", "685-798-00", "MECHANICAL", 1, "PO", 1, "INTERMECH", 1, 450, "ETD 19-Jul", "19-Jul-2024"],
		[35900, "689_023_00", "689-023-00", "MECHANICAL", 1, "PO", 1, "INTERMECH", 1, 450, "ETD 19-Jul", "19-Jul-2024"],
	];

	const rows = source.map(([num, com, cust, desc, short, supp, hand, avl, us, w, remark, buyer]) => ({
		num,
		cells: [
			"1999-01000-" + com, cust, "Fabrication", desc, "1000002913", "ELECTRICAL", "1000",
			"622-784-800", 1, "24-Jun-2024", "17-Jun-2024", short, supp, hand, 0, avl, "RED",
			"Saturn HD Feeder (K-2)HGST #106", "Feeder (K-2)", us, 0, 0, w, remark, buyer,
		],
	}));

	const emptyRows = Array.from({ length: 21 }, (_, i) => 36056 + i);
</script>
